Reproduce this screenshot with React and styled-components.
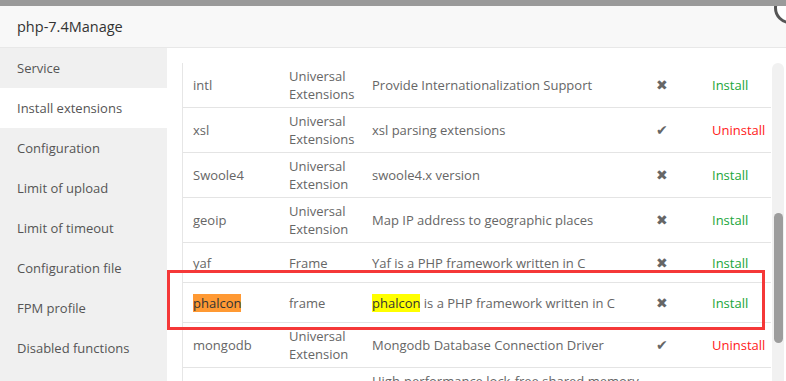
import React from 'react'
import styled, {createGlobalStyle} from 'styled-components'

const GlobalStyle = createGlobalStyle`
  html, body {
    margin: 0;
    padding: 0;
    background: #9a9a9a;
    overflow: hidden;
  }
  body {
    font-family: 'Open Sans', 'Liberation Sans', sans-serif;
  }
`

const Dialog = styled.div`
  position: relative;
  margin-top: 6px;
  height: 375px;
  background: #fff;
  display: flex;
  flex-direction: column;
  overflow: hidden;
`

const Header = styled.div`
  height: 41px;
  flex-shrink: 0;
  display: flex;
  align-items: center;
  padding-left: 17px;
  background: #f8f8f8;
  border-bottom: 1px solid #e8e8e8;
  font-size: 14.5px;
  color: #333;
`

const CloseButton = styled.div`
  position: absolute;
  top: -14px;
  right: -20px;
  width: 26px;
  height: 26px;
  border-radius: 50%;
  background: #fff;
  border: 3px solid #555;
`

const Body = styled.div`
  flex: 1;
  display: flex;
  min-height: 0;
`

const Sidebar = styled.div`
  width: 167px;
  flex-shrink: 0;
  background: #f0f0f0;
  display: flex;
  flex-direction: column;
`

const MenuItem = styled.div`
  height: 40px;
  display: flex;
  align-items: center;
  padding-left: 17px;
  font-size: 13px;
  color: #555;
  background: ${p => (p.$active ? '#fff' : 'transparent')};
`

const Content = styled.div`
  flex: 1;
  display: flex;
  padding: 15px 2px 0 15px;
  min-width: 0;
`

const TableWrap = styled.div`
  flex: 1;
  overflow: hidden;
  border-left: 1px solid #e6e6e6;
`

const Table = styled.table`
  width: 100%;
  border-collapse: collapse;
  table-layout: fixed;
  font-size: 13px;
  color: #666;

  td {
    border-bottom: 1px solid #e4e4e4;
    padding: 4px 10px;
    line-height: 18px;
    height: 31px;
    vertical-align: middle;
  }

  td:nth-child(3) {
    padding-right: 2px;
  }
`

const Status = styled.span`
  font-family: 'DejaVu Sans', sans-serif;
  font-size: 14px;
  color: #666;
`

const Action = styled.span`
  color: ${p => (p.$remove ? '#ff2020' : '#20a53a')};
`

const Mark = styled.span`
  background: ${p => p.$color};
  color: #333;
`

const Scrollbar = styled.div`
  width: 12px;
  margin-left: 1px;
  background: #f1f1f1;
  border-radius: 6px 6px 0 0;
  display: flex;
  flex-direction: column;
  align-items: center;
`

const Thumb = styled.div`
  width: 9px;
  height: 130px;
  margin-top: 150px;
  border-radius: 5px;
  background: #9d9d9d;
`

const Annotation = styled.div`
  position: absolute;
  left: 167px;
  top: 264px;
  width: 592px;
  height: 54px;
  border: 3px solid #f53838;
  pointer-events: none;
`

const menu = [
  'Service',
  'Install extensions',
  'Configuration',
  'Limit of upload',
  'Limit of timeout',
  'Configuration file',
  'FPM profile',
  'Disabled functions'
]

const rows = [
  {name: 'intl', type: 'Universal Extensions', desc: 'Provide Internationalization Support', on: false},
  {name: 'xsl', type: 'Universal Extensions', desc: 'xsl parsing extensions', on: true},
  {name: 'Swoole4', type: 'Universal Extension', desc: 'swoole4.x version', on: false},
  {name: 'geoip', type: 'Universal Extension', desc: 'Map IP address to geographic places', on: false},
  {name: 'yaf', type: 'Frame', desc: 'Yaf is a PHP framework written in C', on: false},
  {name: 'phalcon', type: 'frame', desc: ' is a PHP framework written in C', on: false, mark: true},
  {name: 'mongodb', type: 'Universal Extension', desc: 'Mongodb Database Connection Driver', on: true},
  {
    name: 'memcached',
    type: 'Universal Extension',
    desc: 'High-performance lock-free shared memory cache, requires the memcached service to be installed first',
    on: false
  }
]

const App = () => {
  return (
    <>
      <GlobalStyle/>
      <Dialog>
        <Header>php-7.4Manage</Header>
        <CloseButton/>
        <Body>
          <Sidebar>
            {menu.map((item, i) => (
              <MenuItem key={item} $active={i === 1}>{item}</MenuItem>
            ))}
          </Sidebar>
          <Content>
            <TableWrap>
              <Table>
                <colgroup>
                  <col style={{width: 96}}/>
                  <col style={{width: 83}}/>
                  <col style={{width: 284}}/>
                  <col style={{width: 56}}/>
                  <col/>
                </colgroup>
                <tbody>
                  {rows.map(row => (
                    <tr key={row.name}>
                      <td>
                        {row.mark ? <Mark $color='#ff9933'>{row.name}</Mark> : row.name}
                      </td>
                      <td>{row.type}</td>
                      <td>
                        {row.mark && <Mark $color='#ffff00'>phalcon</Mark>}
                        {row.desc}
                      </td>
                      <td>
                        <Status>{row.on ? '✔' : '✖'}</Status>
                      </td>
                      <td>
                        <Action $remove={row.on}>{row.on ? 'Uninstall' : 'Install'}</Action>
                      </td>
                    </tr>
                  ))}
                </tbody>
              </Table>
            </TableWrap>
            <Scrollbar>
              <Thumb/>
            </Scrollbar>
          </Content>
        </Body>
        <Annotation/>
      </Dialog>
    </>
  )
}

export default App
